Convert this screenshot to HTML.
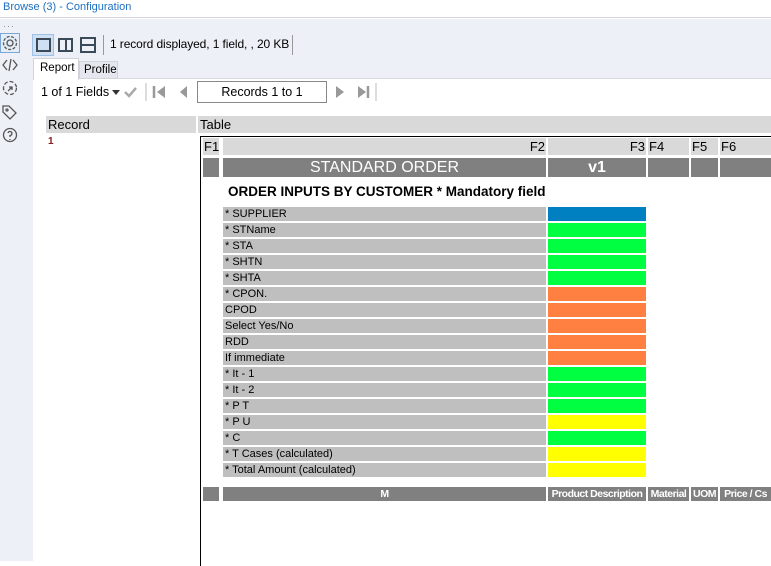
<!DOCTYPE html>
<html><head><meta charset="utf-8"><style>
*{margin:0;padding:0;box-sizing:border-box}
body{width:771px;height:561px;overflow:hidden;background:#fff;font-family:"Liberation Sans",Arial,sans-serif;position:relative}
.a{position:absolute;white-space:nowrap}
.f{font-family:"Liberation Sans",sans-serif}
.lab{position:absolute;left:223px;width:323px;height:14px;background:#bfbfbf;font-size:11px;line-height:15px;padding-left:2px;color:#000;white-space:nowrap}
.val{position:absolute;left:548px;width:98px;height:14px}
.hd{position:absolute;top:138px;height:17px;background:#d9d9d9;font-size:13px;line-height:17px;color:#000}
.gr{position:absolute;top:158px;height:19px;background:#808080;color:#fff;font-size:16px;line-height:19px;text-align:center}
.bh{position:absolute;top:487px;height:14px;background:#808080;color:#fff;font-size:10.5px;line-height:14px;font-weight:bold;text-align:center;letter-spacing:-0.5px;white-space:nowrap;overflow:hidden}
</style></head><body>
<div class="a" style="left:0;top:0;width:771px;height:18px;background:#fff;border-bottom:1px solid #d0d4da"></div>
<div class="a f" style="left:3px;top:0;font-size:11px;color:#1e6fc0;line-height:14px">Browse (3) - Configuration</div>
<div class="a" style="left:0;top:19px;width:771px;height:542px;background:#edf1f7"></div>
<div class="a" style="left:3px;top:21px;font-size:9px;color:#888;letter-spacing:1px">···</div>
<div class="a" style="left:0;top:33px;width:20px;height:20px;border:1px solid #7aa7d6;background:#e4edf8"></div>
<svg class="a" style="left:0;top:33px" width="20" height="130" viewBox="0 0 20 130" fill="none" stroke="#555" stroke-width="1.3">
<circle cx="10" cy="10" r="3"/><circle cx="10" cy="10" r="6.5" stroke-dasharray="3 1.5"/>
<path d="M7 27l-4 5 4 5M13 27l4 5-4 5M11 26l-2 12"/>
<circle cx="10" cy="55" r="6.5" stroke-dasharray="4 2"/><path d="M8 58l4-4M9 54h3v3"/>
<path d="M3 73v6l7 7 6-6-7-7z"/><circle cx="7" cy="77" r="1"/>
<circle cx="10" cy="102" r="6.5"/><path d="M8 100a2 2 0 1 1 2 2.5v1.5M10 106v1"/>
</svg>
<div class="a" style="left:33px;top:33px;width:738px;height:528px;background:#fff"></div>
<div class="a" style="left:33px;top:33px;width:738px;height:26px;background:#edf1f7"></div>
<div class="a" style="left:32px;top:34px;width:22px;height:22px;background:#cfe0f3;border:1px solid #9cc0e6"></div>
<div class="a" style="left:36px;top:38px;width:15px;height:14px;border:2px solid #3a4a58"></div>
<div class="a" style="left:58px;top:38px;width:15px;height:14px;border:2px solid #3a4a58"></div>
<div class="a" style="left:65px;top:38px;width:2px;height:14px;background:#3a4a58"></div>
<div class="a" style="left:80px;top:37px;width:16px;height:16px;border:2px solid #3a4a58"></div>
<div class="a" style="left:80px;top:44px;width:16px;height:2px;background:#3a4a58"></div>
<div class="a" style="left:103px;top:35px;width:1px;height:20px;background:#999"></div>
<div class="a f" style="left:110px;top:37px;font-size:12px;letter-spacing:-0.1px;color:#000">1 record displayed, 1 field, , 20 KB</div>
<div class="a" style="left:292px;top:35px;width:1px;height:20px;background:#999"></div>
<div class="a" style="left:33px;top:59px;width:738px;height:20px;background:#edf1f7;border-bottom:1px solid #d8dce2"></div>
<div class="a f" style="left:33px;top:58px;width:46px;height:22px;background:#fff;border:1px solid #d0d4da;border-bottom:none;font-size:11.5px;padding:3px 0 0 6px">Report</div>
<div class="a f" style="left:79px;top:61px;width:39px;height:18px;background:#e4e8ee;border:1px solid #d0d4da;font-size:11.5px;padding:2px 0 0 4px">Profile</div>
<div class="a f" style="left:41px;top:85px;font-size:12.5px">1 of 1 Fields</div>
<div class="a" style="left:112px;top:90px;border:4px solid transparent;border-top:5px solid #333"></div>
<svg class="a" style="left:122px;top:83px" width="260" height="18"><path d="M3 9l4 4 7-8" stroke="#aaa" stroke-width="2.5" fill="none"/><path d="M24 0v18M254 0v18" stroke="#bbb"/>
<path d="M32 3v12" stroke="#999" stroke-width="2.5"/><path d="M43 3l-8 6 8 6z M65 3l-7 6 7 6z" fill="#999"/>
<path d="M214 3l8 6-8 6z M236 3l8 6-8 6z" fill="#999"/><path d="M246 3v12" stroke="#999" stroke-width="2.5"/></svg>
<div class="a f" style="left:197px;top:81px;width:130px;height:22px;border:1px solid #888;font-size:12.5px;text-align:center;line-height:20px">Records 1 to 1</div>
<div class="a" style="left:46px;top:116px;width:150px;height:17px;background:#d9d9d9;font-size:13px;line-height:17px;padding-left:2px">Record</div>
<div class="a" style="left:198px;top:116px;width:573px;height:17px;background:#d9d9d9;font-size:13px;line-height:17px;padding-left:2px">Table</div>
<div class="a" style="left:48px;top:136px;font-size:10px;font-weight:bold;color:#8b1a1a">1</div>
<div class="a" style="left:200px;top:136px;width:580px;height:430px;border:1px solid #000;border-width:1px 0 0 1px"></div>
<div class="hd" style="left:203px;width:16px;padding-left:1px">F1</div>
<div class="hd" style="left:223px;width:323px;text-align:right;padding-right:1px">F2</div>
<div class="hd" style="left:548px;width:98px;text-align:right;padding-right:1px">F3</div>
<div class="hd" style="left:648px;width:41px;padding-left:1px">F4</div>
<div class="hd" style="left:691px;width:27px;padding-left:1px">F5</div>
<div class="hd" style="left:720px;width:51px;padding-left:1px">F6</div>
<div class="gr" style="left:203px;width:16px"></div>
<div class="gr" style="left:223px;width:323px">STANDARD ORDER</div>
<div class="gr" style="left:548px;width:98px;font-weight:bold">v1</div>
<div class="gr" style="left:648px;width:41px"></div>
<div class="gr" style="left:691px;width:27px"></div>
<div class="gr" style="left:720px;width:51px"></div>
<div class="a" style="left:228px;top:184px;font-size:13.5px;font-weight:bold;color:#000">ORDER INPUTS BY CUSTOMER * Mandatory field</div>
<div class="lab" style="top:207px">* SUPPLIER</div><div class="val" style="top:207px;background:#0080c0"></div>
<div class="lab" style="top:223px">* STName</div><div class="val" style="top:223px;background:#00ff40"></div>
<div class="lab" style="top:239px">* STA</div><div class="val" style="top:239px;background:#00ff40"></div>
<div class="lab" style="top:255px">* SHTN</div><div class="val" style="top:255px;background:#00ff40"></div>
<div class="lab" style="top:271px">* SHTA</div><div class="val" style="top:271px;background:#00ff40"></div>
<div class="lab" style="top:287px">* CPON.</div><div class="val" style="top:287px;background:#ff8040"></div>
<div class="lab" style="top:303px">CPOD</div><div class="val" style="top:303px;background:#ff8040"></div>
<div class="lab" style="top:319px">Select Yes/No</div><div class="val" style="top:319px;background:#ff8040"></div>
<div class="lab" style="top:335px">RDD</div><div class="val" style="top:335px;background:#ff8040"></div>
<div class="lab" style="top:351px">If immediate</div><div class="val" style="top:351px;background:#ff8040"></div>
<div class="lab" style="top:367px">* It - 1</div><div class="val" style="top:367px;background:#00ff40"></div>
<div class="lab" style="top:383px">* It - 2</div><div class="val" style="top:383px;background:#00ff40"></div>
<div class="lab" style="top:399px">* P T</div><div class="val" style="top:399px;background:#00ff40"></div>
<div class="lab" style="top:415px">* P U</div><div class="val" style="top:415px;background:#ffff00"></div>
<div class="lab" style="top:431px">* C</div><div class="val" style="top:431px;background:#00ff40"></div>
<div class="lab" style="top:447px">* T Cases (calculated)</div><div class="val" style="top:447px;background:#ffff00"></div>
<div class="lab" style="top:463px">* Total Amount (calculated)</div><div class="val" style="top:463px;background:#ffff00"></div>
<div class="bh" style="left:203px;width:16px"></div>
<div class="bh" style="left:223px;width:323px">M</div>
<div class="bh" style="left:548px;width:98px">Product Description</div>
<div class="bh" style="left:648px;width:41px">Material</div>
<div class="bh" style="left:691px;width:27px">UOM</div>
<div class="bh" style="left:720px;width:51px">Price / Cs</div>
</body></html>
